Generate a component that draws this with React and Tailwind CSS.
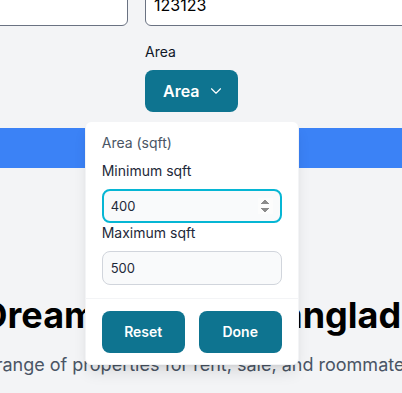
import { useState } from 'react';
import { ChevronDown } from 'lucide-react';

export default function App() {
  const [min, setMin] = useState('400');
  const [max, setMax] = useState('500');

  return (
    <div className="min-h-[393px] bg-gray-100 overflow-hidden font-['Inter',sans-serif] text-gray-900">
      {/* Filters */}
      <div className="-mt-4 -ml-8 grid grid-cols-[160px_300px] gap-x-[17px] gap-y-4">
        <input
          type="text"
          className="h-[42px] rounded-md border border-gray-500 bg-white px-2 text-base outline-none"
        />
        <input
          type="text"
          defaultValue="123123"
          className="h-[42px] rounded-md border border-gray-500 bg-white px-2 text-base text-black outline-none"
        />

        <div className="col-start-2">
          <label className="block text-sm text-gray-900 mb-2">Area</label>
          <div className="relative inline-block">
            <button className="h-[42px] flex items-center gap-2 rounded-lg bg-[#0e7490] pl-[18px] pr-[13px] text-base font-semibold text-white">
              Area
              <ChevronDown size={18} strokeWidth={1.5} />
            </button>

            {/* Dropdown */}
            <div className="absolute top-full mt-[9px] left-1/2 -translate-x-1/2 w-[214px] z-10 rounded-md border border-gray-100 bg-white shadow-lg">
              <div className="px-4 pt-[11px] pb-[13px]">
                <p className="text-sm text-gray-600 mb-2">Area (sqft)</p>
                <label className="block text-sm text-gray-800 mb-2">Minimum sqft</label>
                <input
                  type="number"
                  autoFocus
                  value={min}
                  onChange={e => setMin(e.target.value)}
                  className="block w-full h-[34px] rounded-lg border-2 border-[#06b6d4] bg-gray-50 px-[7px] text-[13px] text-gray-800 outline-none"
                />
                <label className="block text-sm text-gray-800 mb-2">Maximum sqft</label>
                <input
                  type="number"
                  value={max}
                  onChange={e => setMax(e.target.value)}
                  className="block w-full h-[34px] rounded-lg border border-gray-300 bg-gray-50 px-2 text-[13px] text-gray-800 outline-none"
                />
              </div>
              <div className="flex gap-[14px] border-t border-gray-100 px-4 pt-3 pb-[11px]">
                <button className="flex-1 h-[42px] rounded-lg bg-[#0e7490] text-sm font-semibold text-white">Reset</button>
                <button className="flex-1 h-[42px] rounded-lg bg-[#0e7490] text-sm font-semibold text-white">Done</button>
              </div>
            </div>
          </div>
        </div>
      </div>

      {/* Search bar */}
      <div className="mt-4 h-10 bg-[#3b82f6]" />

      {/* Hero */}
      <div className="pt-[127px]">
        <h1 className="-ml-[193px] whitespace-nowrap text-4xl font-bold text-black">Find Your Dream Home in Bangladesh</h1>
        <p className="mt-4 -ml-[134px] whitespace-nowrap text-lg text-gray-600">Explore a wide range of properties for rent, sale, and roommates.</p>
      </div>
    </div>
  );
}
